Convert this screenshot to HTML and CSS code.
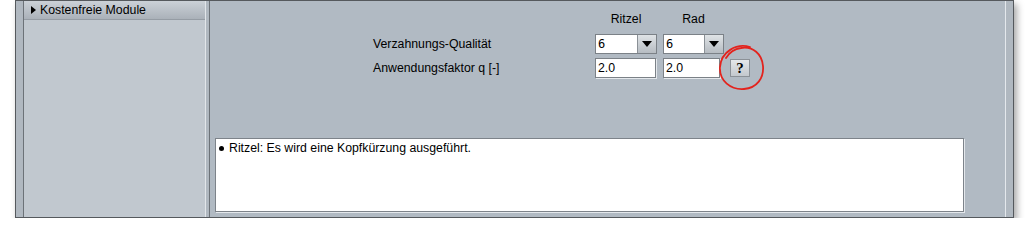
FILE: index.html
```html
<!DOCTYPE html>
<html>
<head>
<meta charset="utf-8">
<link rel="stylesheet" href="styles.css">
</head>
<body>
<div class="window">
  <div class="strip strip-left"></div>
  <div class="sidebar">
    <div class="side-header"><span class="tri"></span>Kostenfreie Module</div>
  </div>
  <div class="strip strip-mid"></div>
  <div class="main">
    <div class="form">
      <div class="label"></div>
      <div class="colhead">Ritzel</div>
      <div class="colhead">Rad</div>
      <div></div>

      <div class="label">Verzahnungs-Qualität</div>
      <div class="combo"><span class="combo-val">6</span><span class="combo-btn"><span class="arrow"></span></span></div>
      <div class="combo"><span class="combo-val">6</span><span class="combo-btn"><span class="arrow"></span></span></div>
      <div></div>

      <div class="label">Anwendungsfaktor q [-]</div>
      <div class="field">2.0</div>
      <div class="field narrow">2.0</div>
      <div class="qbtn">?</div>
    </div>
    <div class="textbox">
      <div class="msg"><span class="bullet"></span>Ritzel: Es wird eine Kopfkürzung ausgeführt.</div>
    </div>
    <svg class="circle" width="52" height="50" viewBox="0 0 52 50">
      <path d="M34 4 C20 0, 5 9, 4 24 C3 38, 15 47, 28 46 C41 45, 48 35, 47 23 C46 11, 37 3, 25 5 C18 6, 13 10, 10 15" fill="none" stroke="#e3231d" stroke-width="1.8" stroke-linecap="round"/>
    </svg>
  </div>
  <div class="strip strip-right"></div>
</div>
</body>
</html>
```

FILE: styles.css
```css
html, body {
  margin: 0;
  padding: 0;
  background: #ffffff;
}
body {
  font-family: "Liberation Sans", Arial, sans-serif;
  font-size: 12px;
  color: #000;
}
.window {
  margin-left: 15px;
  width: 999px;
  height: 218px;
  box-sizing: border-box;
  border: 1px solid #55595d;
  display: flex;
  box-shadow: 3px 4px 7px rgba(0, 0, 0, 0.35);
  background: #b1bac3;
}
.strip {
  background: #b0b8c0;
}
.strip-left {
  width: 7px;
  border-right: 1px solid #6c7278;
}
.strip-mid {
  width: 3px;
  border-right: 1px solid #6c7278;
}
.strip-right {
  width: 7px;
  border-left: 1px solid #e4e8ec;
}
.sidebar {
  width: 181px;
  background: #c1c8cf;
  border-right: 1px solid #e2e6ea;
}
.side-header {
  height: 17px;
  border-bottom: 1px solid #959ca4;
  background: linear-gradient(#cbd1d7, #aab1b9);
  display: flex;
  align-items: center;
  padding-left: 7px;
  font-size: 12.3px;
  line-height: 14px;
  padding-bottom: 1px;
}
.tri {
  width: 0;
  height: 0;
  border-top: 4px solid transparent;
  border-bottom: 4px solid transparent;
  border-left: 5px solid #000;
  margin-right: 4px;
}
.main {
  flex: 1;
  position: relative;
  background: #b1bac3;
  display: flex;
  flex-direction: column;
}
.form {
  display: grid;
  grid-template-columns: 216px 62px 61px 26px;
  column-gap: 6px;
  grid-template-rows: 18px 20px 20px;
  row-gap: 4px;
  padding-left: 163px;
  padding-top: 11px;
  align-items: center;
}
.colhead {
  text-align: center;
  line-height: 15px;
  align-self: start;
  font-size: 12.3px;
}
.label {
  line-height: 15px;
  font-size: 12.3px;
}
.combo {
  height: 20px;
  box-sizing: border-box;
  border: 1px solid #7b8187;
  background: #fff;
  display: flex;
}
.combo-val {
  flex: 1;
  padding-left: 2px;
  line-height: 18px;
  font-family: "DejaVu Sans Mono", "Liberation Mono", monospace;
  font-size: 12px;
}
.combo-btn {
  width: 18px;
  border-left: 1px solid #8a9096;
  background: linear-gradient(#dfe3e6, #b6bcc2);
  display: flex;
  align-items: center;
  justify-content: center;
}
.arrow {
  width: 0;
  height: 0;
  border-left: 5px solid transparent;
  border-right: 5px solid transparent;
  border-top: 6px solid #000;
}
.field {
  height: 20px;
  box-sizing: border-box;
  border: 1px solid #7b8187;
  box-shadow: 1px 1px 0 #e4e8ec;
  background: #fff;
  padding-left: 2px;
  line-height: 18px;
  width: 61px;
  font-size: 12.3px;
}
.field.narrow {
  width: 57px;
}
.qbtn {
  width: 20px;
  height: 18px;
  box-sizing: border-box;
  border: 1px solid #8b9197;
  background: linear-gradient(#e4e7ea, #c3c8cd);
  font-family: "Liberation Serif", serif;
  font-weight: bold;
  font-size: 15px;
  line-height: 16px;
  text-align: center;
}
.textbox {
  margin-top: 60px;
  margin-left: 5px;
  width: 749px;
  height: 74px;
  box-sizing: border-box;
  border: 1px solid #7d838a;
  box-shadow: 1px 1px 0 #e4e8ec;
  background: #fff;
  padding: 2px 2px;
}
.msg {
  display: flex;
  align-items: center;
  line-height: 15px;
  font-size: 12.3px;
}
.bullet {
  width: 5px;
  height: 5px;
  border-radius: 50%;
  background: #000;
  margin-left: 1px;
  margin-right: 5px;
}
.circle {
  position: absolute;
  left: 506px;
  top: 42px;
}
```
